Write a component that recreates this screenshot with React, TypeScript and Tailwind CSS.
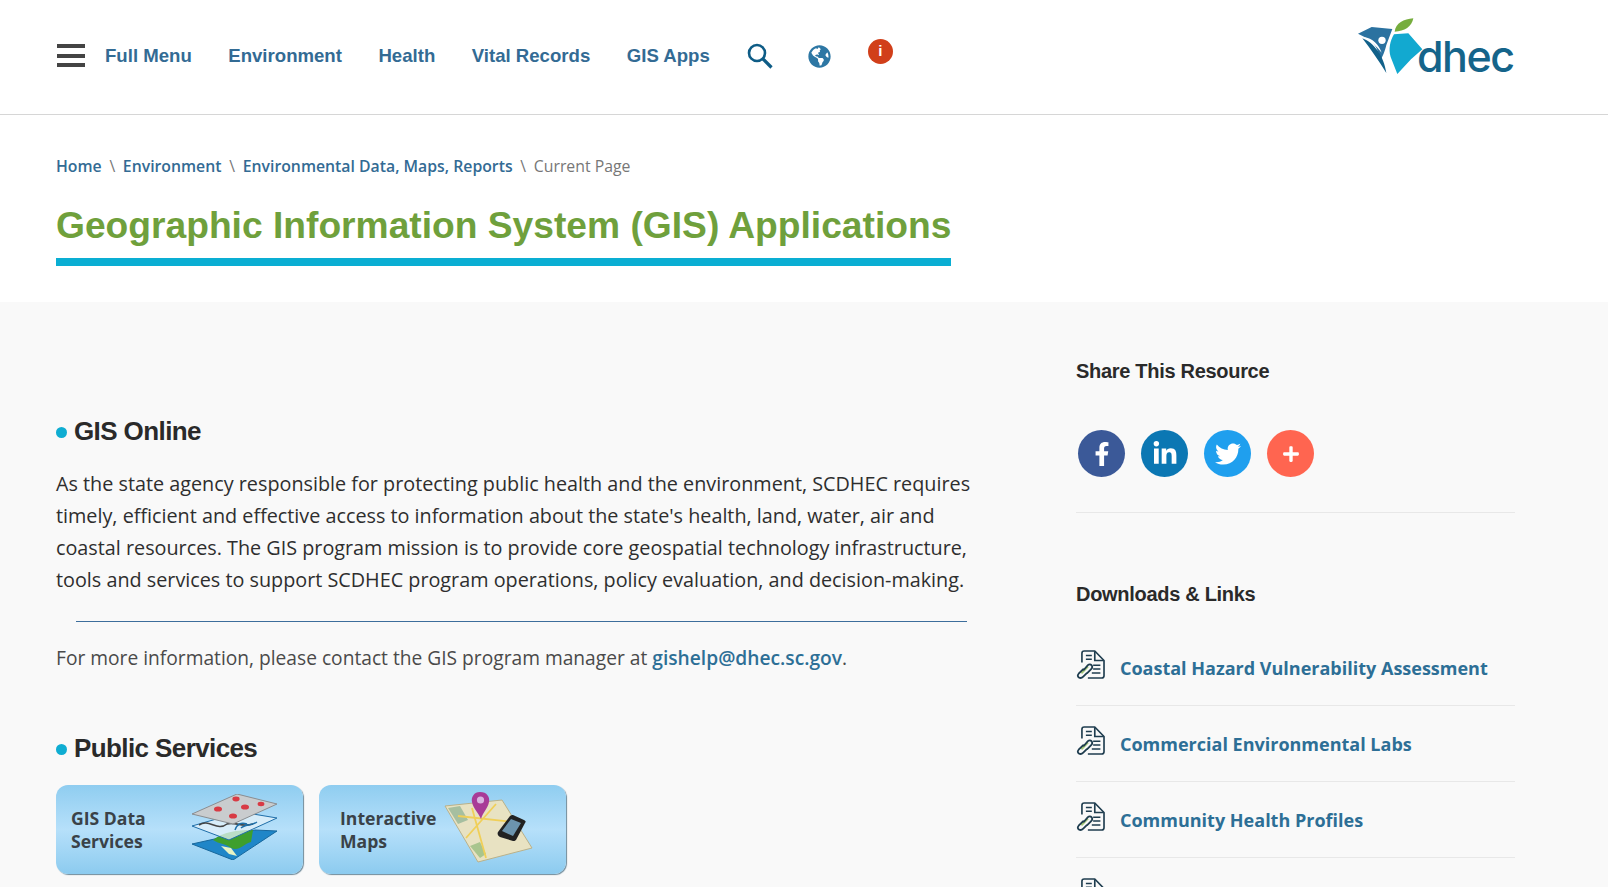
import React from "react";
import { FaFacebookF, FaLinkedinIn, FaTwitter, FaPlus, FaGlobeAmericas } from "react-icons/fa";

const arial = "font-['Liberation_Sans',Arial,sans-serif]";
const open = "font-['Open_Sans',sans-serif]";

function Logo() {
  return (
    <div className="relative w-[200px] h-[90px] ml-auto mr-[79px] mt-[-22px] shrink-0">
      <svg width="200" height="90" viewBox="0 0 600 270" className="block">
        <path d="M197 92C200 66 224 54 253 52C249 76 226 92 197 92Z" fill="#76ad3d" />
        <path d="M87 98L128 78L190 84L172 132C168 150 160 170 152 180C152 155 140 130 120 115Z" fill="#2b72a0" />
        <path d="M100 112C135 125 165 165 172 216C150 180 125 145 100 112Z" fill="#12618a" />
        <path d="M105 108C130 112 150 130 158 155C142 135 125 120 105 108Z" fill="#fff" />
        <circle cx="159" cy="118" r="11" fill="#fff" />
        <path d="M195 100L238 97L280 145L246 175L205 219L185 168C178 145 183 120 195 100Z" fill="#12a9d0" />
      </svg>
      <span className="absolute left-[88px] top-[32px] text-[43px] leading-[46px] tracking-[-1.5px] font-medium text-[#15648a] font-['Inter',sans-serif]">dhec</span>
    </div>
  );
}

function DocIcon() {
  return (
    <svg width="29" height="29" viewBox="48 30 88 88" fill="none" className="shrink-0 mt-[-7px]">
      <path d="M66 68V40C66 35 69 33 73 33H105L133 62V108C133 113 130 115 126 115H84" stroke="#1f3d4f" strokeWidth="5" strokeLinejoin="round" />
      <path d="M105 34V62H132" stroke="#1f3d4f" strokeWidth="5" />
      <path d="M78 47H96M78 58H96M100 76H122M100 88H122M96 100H122" stroke="#1f3d4f" strokeWidth="4.500" />
      <path d="M64 100L84 80" stroke="#a5c977" strokeWidth="7" />
      <path d="M70 88L56 102C48 111 61 120 70 111L80 101M72 90L84 76C92 68 102 80 94 88L82 100" stroke="#1f3d4f" strokeWidth="5.500" strokeLinecap="round" />
    </svg>
  );
}

function Heading({ children }: { children: React.ReactNode }) {
  return (
    <h2 className={`${arial} flex items-center font-bold text-[26px] leading-[32px] tracking-[-0.6px] text-[#2a2a2a]`}>
      <span className="w-[11px] h-[11px] rounded-full bg-[#0fadd2] mr-[7px] mt-[3px] shrink-0" />
      {children}
    </h2>
  );
}

function Social({ bg, children }: { bg: string; children: React.ReactNode }) {
  return <span className={`w-[47px] h-[47px] rounded-full flex items-center justify-center text-white ${bg}`}>{children}</span>;
}

function Row({ label, line = true }: { label: string; line?: boolean }) {
  return (
    <a className={`flex items-center h-[76px] gap-[15px] ${line ? "border-b border-[#e8e8e8]" : ""}`}>
      <DocIcon />
      <span className={`${open} font-bold text-[18px] mt-[1px] text-[#2d6f96]`}>{label}</span>
    </a>
  );
}

function Layers() {
  return (
    <svg width="90" height="66" viewBox="0 0 90 66" className="shrink-0 mt-[-5px]">
      <path d="M1 50L64 36L86 37L42 66Z" fill="#1f86c8" stroke="#17679c" />
      <path d="M22 46C32 38 46 36 62 36L60 48C52 50 48 58 40 54C36 50 28 50 22 46Z" fill="#3e9f2d" />
      <path d="M30 52L40 54L46 62L38 60Z" fill="#e8f3c4" />
      <path d="M1 32L50 18L86 24L38 46Z" fill="#e4f1fa" fillOpacity=".75" stroke="#1f6ea8" />
      <path d="M8 31C18 24 26 38 36 30C44 27 50 34 62 30" stroke="#444" strokeWidth="1.600" fill="none" />
      <path d="M44 36C46 30 50 28 56 30M50 34C54 30 60 32 66 28" stroke="#1d6ea8" strokeWidth="1.400" fill="none" />
      <path d="M1 20L46 0L86 10L42 30Z" fill="#c9ccce" stroke="#8a8d90" />
      <g fill="#d83a44">
        <ellipse cx="27" cy="15" rx="4" ry="2.600" />
        <ellipse cx="45" cy="5" rx="3.600" ry="2.400" />
        <ellipse cx="54" cy="13" rx="4" ry="2.600" />
        <ellipse cx="42" cy="22" rx="4" ry="2.600" />
        <ellipse cx="70" cy="10" rx="3.400" ry="2.200" />
      </g>
    </svg>
  );
}

function MapPic() {
  return (
    <svg width="90" height="72" viewBox="0 0 90 70" className="shrink-0 mt-[-5px]">
      <path d="M1 14L58 8L88 56L34 70Z" fill="#e8e2c2" stroke="#b9b18a" />
      <path d="M4 16L16 14L24 28L14 32Z" fill="#a6bfa0" />
      <path d="M26 54L36 50L42 62L36 66Z" fill="#a9c58e" />
      <path d="M14 24L70 30M28 16L42 66M52 12L22 46" stroke="#f0cf58" strokeWidth="1.800" />
      <path d="M36 0C43 0 46 5 45 10C44 16 39 20 37 27C34 20 29 16 28 10C27 5 30 0 36 0Z" fill="#a83b97" />
      <circle cx="36.500" cy="8" r="3.600" fill="#d8b5e0" />
      <path d="M54 40L66 24C67 23 68 23 69 23L80 28C82 29 82 30 81 31L72 48C71 49 70 49 69 49L56 45C54 44 53 42 54 40Z" fill="#222" />
      <path d="M58 39L67 27L77 31L69 44Z" fill="#6c94ae" />
    </svg>
  );
}

function Tile({ a, b, pic, className }: { a: string; b: string; pic: React.ReactNode; className?: string }) {
  return (
    <div className={`w-[247px] h-[89px] rounded-[12px] bg-gradient-to-b from-[#8fcdf0] via-[#b6e0fa] to-[#8ccbef] shadow-[1px_1px_1px_#6f8b9b] flex items-center justify-between ${className}`}>
      <div className={`${open} font-bold text-[17.6px] leading-[23px] text-[#3a4248]`}>
        {a}
        <br />
        {b}
      </div>
      {pic}
    </div>
  );
}

export default function App() {
  return (
    <div className="h-[887px] w-[1608px] overflow-hidden bg-white">
      <header className="h-[115px] border-b border-[#d6d6d6] pl-[57px] flex items-center">
        <div className="flex items-center w-[28px] h-[23px] flex-col justify-between shrink-0 mt-[-3px]">
          <span className="block w-full h-[4px] bg-[#444]" />
          <span className="block w-full h-[4px] bg-[#444]" />
          <span className="block w-full h-[4px] bg-[#444]" />
        </div>
        <nav className={`${arial} flex items-center font-bold text-[18.6px] text-[#336b94] ml-[20px] gap-[36.500px] mt-[-2px]`}>
          <a>Full Menu</a>
          <a>Environment</a>
          <a>Health</a>
          <a>Vital Records</a>
          <a>GIS Apps</a>
        </nav>
        <svg width="26" height="26" viewBox="0 0 26 26" fill="none" className="ml-[37px] mt-[-2px]">
          <circle cx="10" cy="10" r="8" stroke="#0e5c86" strokeWidth="2.600" />
          <path d="M16 16L24.500 24.500" stroke="#0e5c86" strokeWidth="3.200" />
        </svg>
        <FaGlobeAmericas className="ml-[35px] text-[#2d77a4] text-[23px] mt-[-2px]" />
        <span className={`ml-[37px] mt-[-11px] w-[25px] h-[25px] rounded-full bg-[#d13f1a] flex items-center justify-center text-white font-bold text-[15px] ${arial}`}>i</span>
        <Logo />
      </header>

      <section className="h-[187px] px-[56px] pt-[39px]">
        <div className={`${open} text-[15.8px] leading-[24px] text-[#777] flex gap-[7.700px]`}>
          <a className="text-[#336b94] font-semibold">Home</a>
          <span>\</span>
          <a className="text-[#336b94] font-semibold">Environment</a>
          <span>\</span>
          <a className="text-[#336b94] font-semibold">Environmental Data, Maps, Reports</a>
          <span>\</span>
          <span>Current Page</span>
        </div>
        <h1 className={`${arial} inline-block mt-[24px] font-bold text-[37.2px] leading-[46px] pb-[10px] border-b-[8px] border-[#0aaed3] text-[#6fa03c]`}>
          Geographic Information System (GIS) Applications
        </h1>
      </section>

      <main className="h-[585px] bg-[#f9f9f9] pl-[56px] flex">
        <div className="w-[920px] pt-[113px]">
          <Heading>GIS Online</Heading>
          <p className={`${open} mt-[21px] text-[19.8px] leading-[32px] font-medium text-[#2e2e2e]`}>
            As the state agency responsible for protecting public health and the environment, SCDHEC requires timely, efficient and effective access to information about the state's health, land, water, air and coastal resources. The GIS program mission is to provide core geospatial technology infrastructure, tools and services to support SCDHEC program operations, policy evaluation, and decision-making.
          </p>
          <div className="mt-[25px] ml-[20px] w-[891px] h-px bg-[#3d6e9c]" />
          <p className={`${open} mt-[20px] text-[19.2px] leading-[32px] text-[#4a4a4a]`}>
            For more information, please contact the GIS program manager at <a className="text-[#2d6f96] font-semibold">gishelp@dhec.sc.gov</a>.
          </p>
          <div className="mt-[58px]">
            <Heading>Public Services</Heading>
          </div>
          <div className="flex gap-[16px] mt-[21px]">
            <Tile a="GIS Data" b="Services" pic={<Layers />} className="pl-[15px] pr-[22px]" />
            <Tile a="Interactive" b="Maps" pic={<MapPic />} className="pl-[21px] pr-[32px]" />
          </div>
        </div>
        <aside className="ml-[100px] w-[439px] pt-[54px]">
          <h3 className={`${arial} font-bold text-[20px] leading-[30px] tracking-[-0.3px] text-[#2a2a2a]`}>Share This Resource</h3>
          <div className="flex gap-[16px] ml-[2px] mt-[44px]">
            <Social bg="bg-[#3b5998]"><FaFacebookF size={24} /></Social>
            <Social bg="bg-[#0b77b3]"><FaLinkedinIn size={26} /></Social>
            <Social bg="bg-[#1f9fee]"><FaTwitter size={26} /></Social>
            <Social bg="bg-[#ff6550]"><FaPlus size={18} /></Social>
          </div>
          <div className="mt-[35px] border-b border-[#e8e8e8]" />
          <h3 className={`${arial} mt-[66px] font-bold text-[20px] leading-[30px] tracking-[-0.3px] text-[#2a2a2a]`}>Downloads & Links</h3>
          <div className="mt-[21px]">
            <Row label="Coastal Hazard Vulnerability Assessment" />
            <Row label="Commercial Environmental Labs" />
            <Row label="Community Health Profiles" />
            <Row label="" line={false} />
          </div>
        </aside>
      </main>
    </div>
  );
}
